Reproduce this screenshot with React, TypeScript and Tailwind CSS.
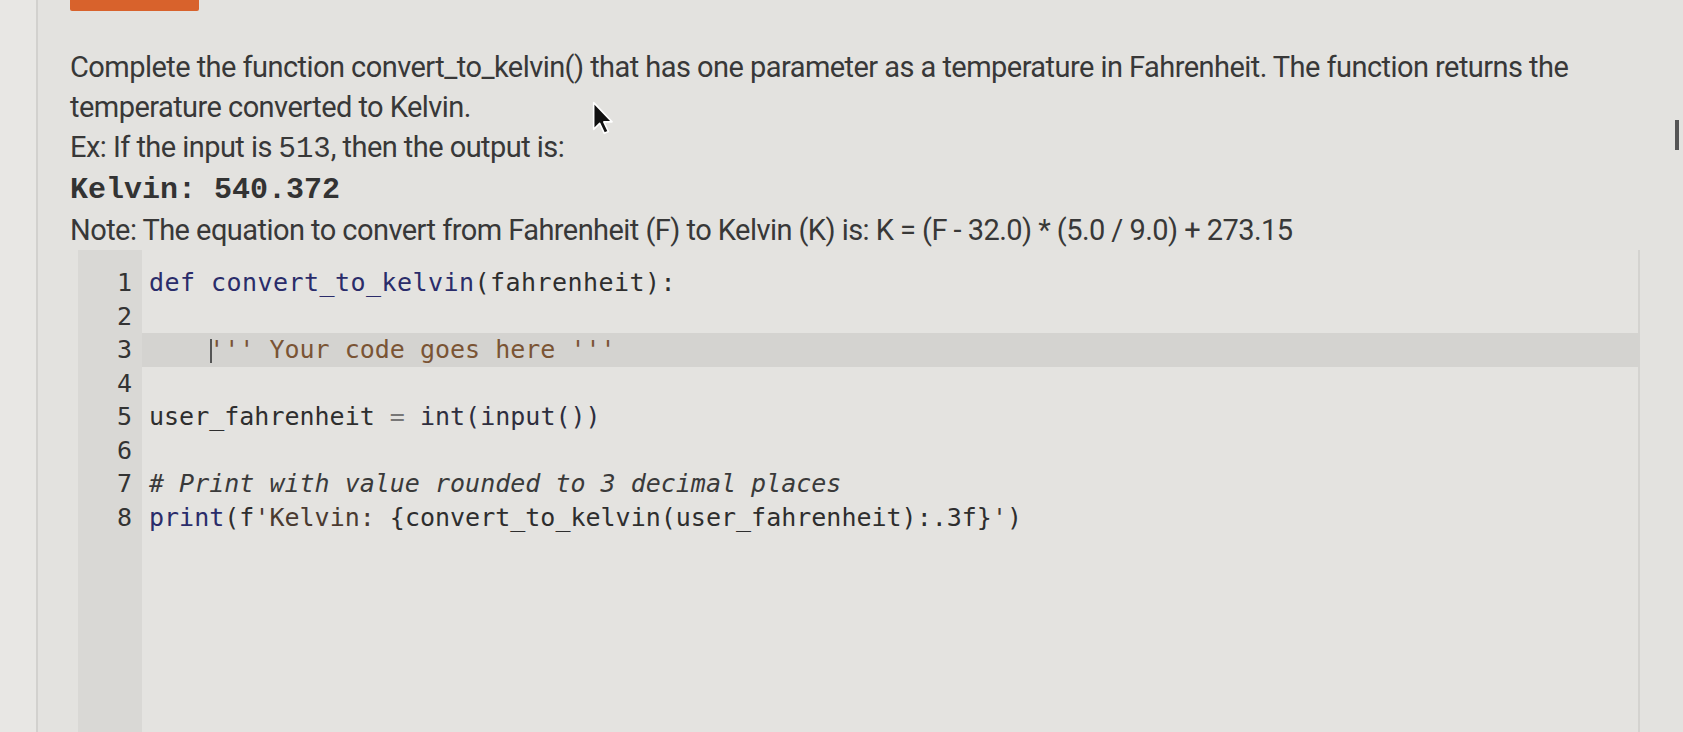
import React from "react";

const mono = { fontFamily: '"DejaVu Sans Mono", monospace' };

function Cursor() {
  return (
    <svg width="24" height="36" viewBox="0 0 18 27" className="absolute left-[591px] top-[100px]">
      <path d="M2 2 L2 22 L6.5 17.5 L10 25 L13 23.6 L9.6 16.4 L15.8 16.4 Z" fill="#111" stroke="#fff" strokeWidth="1.2" strokeLinejoin="round" />
    </svg>
  );
}

export default function App() {
  const lines: React.ReactNode[] = [
    <span className="tracking-[0.45px]">
      <span className="text-[#2a2c6a]">def</span> <span className="text-[#2a2c6a]">convert_to_kelvin</span>
      <span className="text-[#2e2e2e]">(fahrenheit):</span>
    </span>,
    <>&nbsp;</>,
    <>
      {"    "}
      <span className="text-[#7a5434]">''' Your code goes here '''</span>
    </>,
    <>&nbsp;</>,
    <>
      <span className="text-[#2e2e2e]">user_fahrenheit</span> <span className="text-[#777]">=</span>{" "}
      <span className="text-[#2e2e3e]">int(input())</span>
    </>,
    <>&nbsp;</>,
    <span className="italic text-[#3a3a3a]"># Print with value rounded to 3 decimal places</span>,
    <>
      <span className="text-[#2a2c6a]">print</span>
      <span className="text-[#2e2e2e]">(f</span>
      <span className="text-[#4a3a30]">'Kelvin: </span>
      <span className="text-[#2e2e2e]">{"{convert_to_kelvin(user_fahrenheit):.3f}"}</span>
      <span className="text-[#4a3a30]">'</span>
      <span className="text-[#2e2e2e]">)</span>
    </>,
  ];

  return (
    <div className="relative flex h-[732px] w-[1683px] overflow-hidden bg-[#e3e2df]">
      {/* left strip */}
      <div className="h-full w-[38px] shrink-0 border-r-2 border-[#d2d1ce] bg-[#e8e7e4]" />

      <div className="flex min-w-0 flex-1 flex-col pl-[32px]">
        <div className="h-[11px] w-[129px] rounded-b-[2px] bg-[#d8622c]" />

        <div
          className="mt-[36px] text-[29px] leading-[40px] tracking-[-0.55px] text-[#383838]"
          style={{ fontFamily: 'Roboto, "Noto Sans", sans-serif' }}
        >
          <p className="pr-[60px]">
            Complete the function convert_to_kelvin() that has one parameter as a temperature in Fahrenheit. The function returns the
            temperature converted to Kelvin.
          </p>
          <p>
            Ex: If the input is{" "}
            <span className="text-[29px] tracking-normal" style={{ fontFamily: '"Liberation Mono", monospace' }}>
              513
            </span>
            , then the output is:
          </p>
          <p className="text-[30px] font-bold tracking-normal text-[#333]" style={{ fontFamily: '"Liberation Mono", monospace' }}>
            Kelvin: 540.372
          </p>
          <p>Note: The equation to convert from Fahrenheit (F) to Kelvin (K) is: K = (F - 32.0) * (5.0 / 9.0) + 273.15</p>
        </div>

        {/* editor */}
        <div className="ml-[8px] flex w-[1562px] flex-1 border-r-2 border-[#d4d3d0] bg-[#e4e3e0]">
          <div
            className="w-[64px] shrink-0 bg-[#d9d8d5] pt-[16px] pr-[10px] text-right text-[25px] leading-[33.5px] text-[#333]"
            style={mono}
          >
            {lines.map((_, i) => (
              <div key={i}>{i + 1}</div>
            ))}
          </div>
          <div className="flex-1 pt-[16px] text-[25px] leading-[33.5px]" style={mono}>
            {lines.map((l, i) => (
              <div
                key={i}
                className={"relative whitespace-pre pl-[7px] " + (i === 2 ? "bg-[#d4d3d0]" : "")}
              >
                {i === 2 && <span className="absolute left-[68px] top-[6px] h-[24px] w-[2px] bg-[#555]" />}
                {l}
              </div>
            ))}
          </div>
        </div>
      </div>

      <div className="absolute right-[4px] top-[120px] h-[30px] w-[4px] bg-[#555]" />
      <Cursor />
    </div>
  );
}
